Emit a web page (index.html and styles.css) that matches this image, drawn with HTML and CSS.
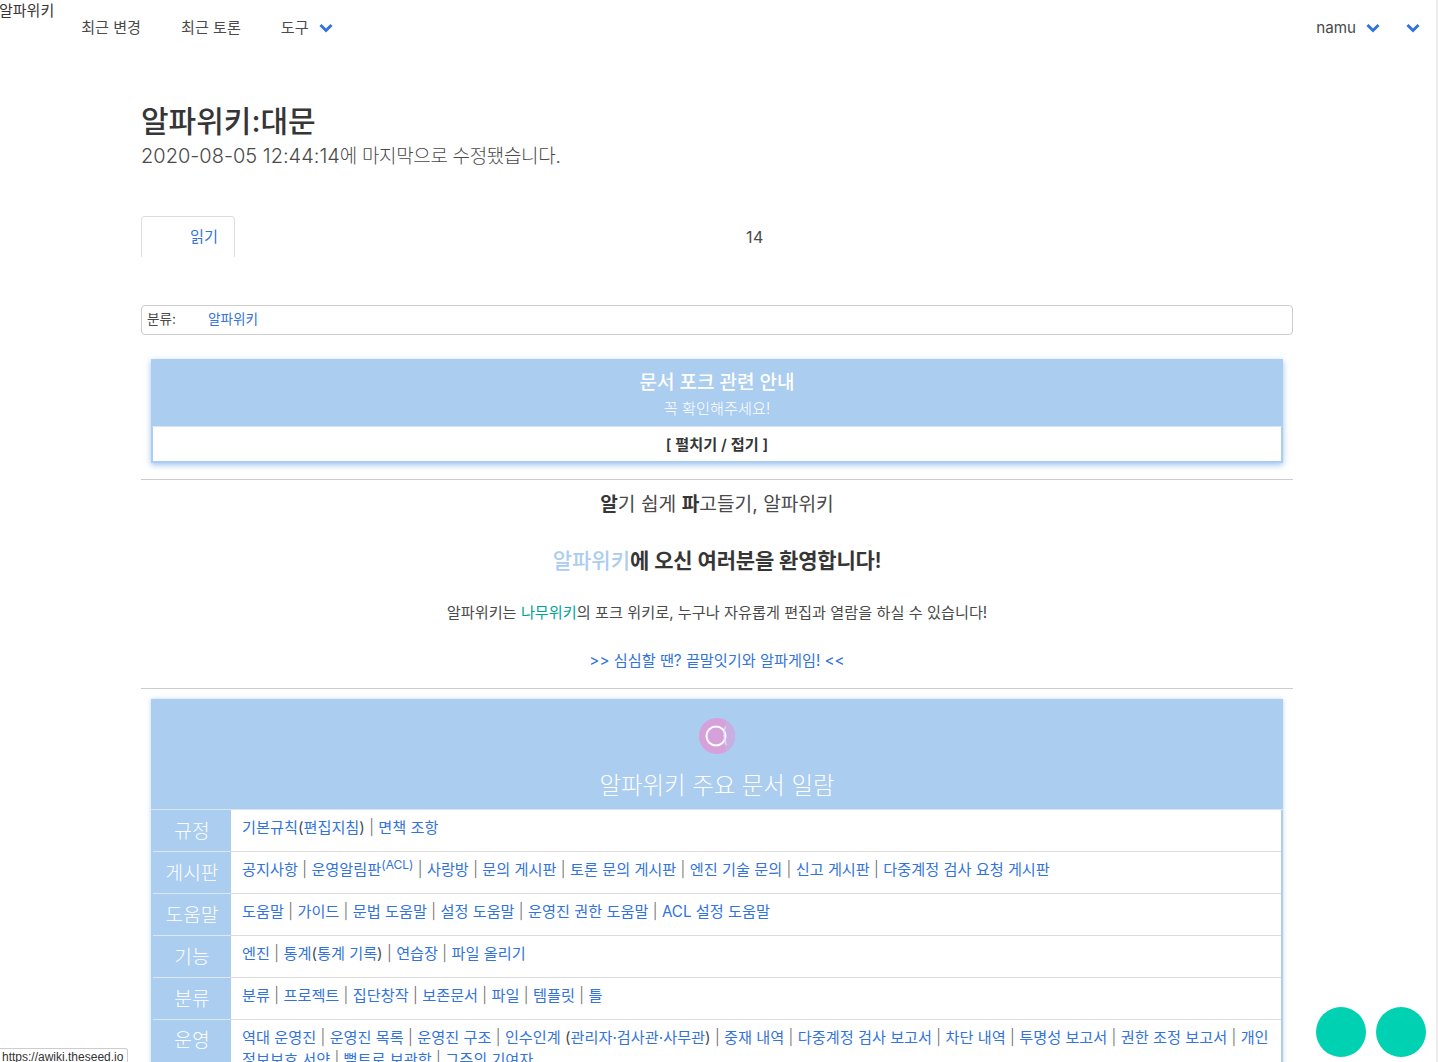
FILE: index.html
```html
<!DOCTYPE html>
<html lang="ko">
<head>
<meta charset="utf-8">
<title>알파위키:대문</title>
<link rel="stylesheet" href="styles.css">
</head>
<body>
<nav class="nav">
  <a class="brand">알파위키</a>
  <ul class="nav-left">
    <li>최근 변경</li>
    <li>최근 토론</li>
    <li>도구<svg class="chev" viewBox="0 0 14 10"><path d="M1.500 2 7 7.500 12.500 2"/></svg></li>
  </ul>
  <ul class="nav-right">
    <li>namu<svg class="chev" viewBox="0 0 14 10"><path d="M1.500 2 7 7.500 12.500 2"/></svg></li>
    <li><svg class="chev" viewBox="0 0 14 10"><path d="M1.500 2 7 7.500 12.500 2"/></svg></li>
  </ul>
</nav>
<main class="main">
  <h1 class="title">알파위키:대문</h1>
  <p class="modified">2020-08-05 12:44:14<span class="stamp-text">에 마지막으로 수정됐습니다.</span></p>
  <div class="tabs">
    <a class="tab">읽기</a>
    <span class="count">14</span>
  </div>
  <div class="category"><span class="cat-label">분류:</span><a class="link">알파위키</a></div>
  <section class="fold">
    <header class="fold-head">
      <div class="fold-title">문서 포크 관련 안내</div>
      <div class="fold-sub">꼭 확인해주세요!</div>
    </header>
    <div class="fold-toggle">[ 펼치기 / 접기 ]</div>
  </section>
  <hr class="rule first">
  <div class="welcome">
    <p class="slogan"><b>알</b>기 쉽게 <b>파</b>고들기, 알파위키</p>
    <p class="greet"><span class="sky">알파위키</span>에 오신 여러분을 환영합니다!</p>
    <p class="intro">알파위키는 <span class="namu">나무위키</span>의 포크 위키로, 누구나 자유롭게 편집과 열람을 하실 수 있습니다!</p>
    <p class="game"><a class="link">&gt;&gt; 심심할 땐? 끝말잇기와 알파게임! &lt;&lt;</a></p>
  </div>
  <hr class="rule">
  <section class="index">
    <header class="index-head">
      <svg class="logo" viewBox="0 0 36 36">
        <circle cx="18" cy="18" r="18" fill="#d6a0da"/>
        <path d="M27 2.500 A18 18 0 0 1 27 33.500 Q23 18 27 2.500Z" fill="#c9aee2"/>
        <circle cx="17" cy="18" r="9.500" fill="none" stroke="#fff" stroke-width="2"/>
        <path d="M26.500 8.500 Q23 18 27.500 27" fill="none" stroke="#eadcf2" stroke-width="1.200"/>
      </svg>
      <div class="index-title">알파위키 주요 문서 일람</div>
    </header>
    <div class="row"><div class="label">규정</div><div class="cell"><a class="link">기본규칙</a>(<a class="link">편집지침</a>) <span class="sep">|</span> <a class="link">면책 조항</a></div></div>
    <div class="row"><div class="label">게시판</div><div class="cell"><a class="link">공지사항</a> <span class="sep">|</span> <a class="link">운영알림판</a><sup class="link">(ACL)</sup> <span class="sep">|</span> <a class="link">사랑방</a> <span class="sep">|</span> <a class="link">문의 게시판</a> <span class="sep">|</span> <a class="link">토론 문의 게시판</a> <span class="sep">|</span> <a class="link">엔진 기술 문의</a> <span class="sep">|</span> <a class="link">신고 게시판</a> <span class="sep">|</span> <a class="link">다중계정 검사 요청 게시판</a></div></div>
    <div class="row"><div class="label">도움말</div><div class="cell"><a class="link">도움말</a> <span class="sep">|</span> <a class="link">가이드</a> <span class="sep">|</span> <a class="link">문법 도움말</a> <span class="sep">|</span> <a class="link">설정 도움말</a> <span class="sep">|</span> <a class="link">운영진 권한 도움말</a> <span class="sep">|</span> <a class="link">ACL 설정 도움말</a></div></div>
    <div class="row"><div class="label">기능</div><div class="cell"><a class="link">엔진</a> <span class="sep">|</span> <a class="link">통계</a>(<a class="link">통계 기록</a>) <span class="sep">|</span> <a class="link">연습장</a> <span class="sep">|</span> <a class="link">파일 올리기</a></div></div>
    <div class="row"><div class="label">분류</div><div class="cell"><a class="link">분류</a> <span class="sep">|</span> <a class="link">프로젝트</a> <span class="sep">|</span> <a class="link">집단창작</a> <span class="sep">|</span> <a class="link">보존문서</a> <span class="sep">|</span> <a class="link">파일</a> <span class="sep">|</span> <a class="link">템플릿</a> <span class="sep">|</span> <a class="link">틀</a></div></div>
    <div class="row"><div class="label">운영</div><div class="cell"><a class="link">역대 운영진</a> <span class="sep">|</span> <a class="link">운영진 목록</a> <span class="sep">|</span> <a class="link">운영진 구조</a> <span class="sep">|</span> <a class="link">인수인계</a> (<a class="link">관리자·검사관·사무관</a>) <span class="sep">|</span> <a class="link">중재 내역</a> <span class="sep">|</span> <a class="link">다중계정 검사 보고서</a> <span class="sep">|</span> <a class="link">차단 내역</a> <span class="sep">|</span> <a class="link">투명성 보고서</a> <span class="sep">|</span> <a class="link">권한 조정 보고서</a> <span class="sep">|</span> <a class="link">개인정보보호 서약</a> <span class="sep">|</span> <a class="link">뻘트로 보관함</a> <span class="sep">|</span> <a class="link">그주의 기여자</a></div></div>
  </section>
</main>
<div class="fabs"><span class="fab"></span><span class="fab"></span></div>
<div class="status">https://awiki.theseed.io</div>
</body>
</html>
```
FILE: styles.css
```css
* { box-sizing: border-box; }
html, body { margin: 0; height: 100%; overflow: hidden; }
body {
  background: #fff;
  color: #4a4a4a;
  font-family: Inter, "Noto Sans CJK KR", sans-serif;
  font-size: 15.200px;
  border-right: 2px solid #ececec;
}
.link { color: #3273dc; }
.sep { color: #666; font-weight: 300; letter-spacing: 0.170px; }
.nav { display: flex; height: 55px; align-items: flex-start; }
.brand { font-size: 15px; line-height: 22px; margin-left: -1px; color: #363636; }
.nav-left, .nav-right { list-style: none; margin: 0; padding: 0; display: flex; color: #4a4a4a; }
.nav-left { margin-left: 27px; gap: 40px; margin-top: 17px; font-size: 15.100px; }
.nav-right { margin-left: auto; margin-top: 17px; margin-right: 16px; gap: 16px; }
.nav li { display: flex; align-items: center; line-height: 22px; }
.chev { width: 14px; height: 10px; margin-left: 10px; fill: none; stroke: #3273dc; stroke-width: 3; }
.main { width: 1152px; margin-left: 141px; }
.title { font-size: 30px; font-weight: 500; line-height: 40px; margin: 46px 0 0; color: #363636; }
.modified { font-size: 20px; font-weight: 300; line-height: 30px; height: 30px; margin: 0; color: #4a4a4a; }
.stamp-text { font-size: 19px; letter-spacing: -0.350px; }
.tabs { display: flex; height: 41px; margin-top: 45px; align-items: stretch; }
.tab {
  width: 94px; padding: 9px 16px 0 0; text-align: right;
  border: 1px solid #ddd; border-bottom: 0; border-radius: 4px 4px 0 0;
  color: #3273dc; line-height: 22px;
}
.count { margin-left: 511px; line-height: 22px; padding-top: 10px; font-size: 16px; letter-spacing: 0.500px; }
.category {
  display: flex; align-items: center; height: 30px; margin-top: 48px;
  padding: 0 0 4px 5px; border: 1px solid #ccc; border-radius: 4px; font-size: 13.600px;
}
.cat-label { width: 61px; }
.fold { margin: 24px 10px 0; box-shadow: 0 2px 6px rgba(120, 170, 235, 0.700); }
.fold-head { background: #abcdf0; color: #fff; height: 67px; text-align: center; padding-top: 11px; }
.fold-title { font-size: 19px; font-weight: 500; line-height: 26px; }
.fold-sub { font-size: 15.200px; line-height: 20px; margin-top: 3px; font-weight: 300; }
.fold-toggle {
  height: 37px; border: 2px solid #abcdf0; border-top: 1px solid #d8e6f4; background: #fff;
  text-align: center; font-weight: 600; line-height: 35px; color: #363636;
}
.rule { border: 0; border-top: 1px solid #ccc; margin: 0; }
.rule.first { margin-top: 16px; }
.welcome { height: 208px; text-align: center; overflow: hidden; }
.welcome p { margin: 0; }
.slogan { font-size: 19.200px; line-height: 28px; margin-top: 10px !important; }
.slogan b { font-weight: 700; color: #363636; }
.greet { font-size: 21px; font-weight: 600; line-height: 30px; margin-top: 28px !important; color: #363636; letter-spacing: -0.200px; }
.sky { color: #abcdf0; font-weight: 500; letter-spacing: 0; }
.intro { line-height: 22px; margin-top: 26px !important; }
.namu { color: #00a495; }
.game { line-height: 22px; margin-top: 26px !important; }
.index { margin: 10px 10px 0; border: 2px solid #abcdf0; border-width: 0 2px; box-shadow: 0 0 4px rgba(120, 170, 235, 0.500); }
.index-head { height: 111px; background: #abcdf0; color: #fff; text-align: center; padding-top: 19px; border-bottom: 1px solid #dbe5f0; margin: 0 -2px; }
.logo { width: 36px; height: 36px; display: block; margin: 0 auto; }
.index-title { font-size: 23.400px; font-weight: 300; line-height: 34px; margin-top: 15px; }
.row { display: flex; height: 42px; border-bottom: 1px solid #ddd; }
.row:last-child { height: 80px; }
.label {
  width: 78px; flex: none; background: #abcdf0; color: #fff; font-size: 19.200px; font-weight: 300;
  display: flex; align-items: center; justify-content: center; padding-bottom: 2px;
  border-bottom: 1px solid #dce7f3; margin-bottom: -1px;
}
.row:last-child .label { align-items: flex-start; padding-top: 5px; }
.cell { flex: 1; padding: 7px 8px 0 11px; line-height: 22px; }
sup { font-size: 12px; line-height: 0; }
.fabs { position: fixed; right: 12px; bottom: 5px; display: flex; gap: 10px; }
.fab { width: 50px; height: 50px; border-radius: 50%; background: #00d1b2; }
.status {
  position: fixed; left: 0; bottom: 0; height: 14px; padding: 0 4px 0 2px; overflow: hidden;
  font: 12px/17px "Liberation Sans", sans-serif; color: #333; background: #fff;
  border: 1px solid #ccc; border-bottom: 0; border-left: 0; border-radius: 0 3px 0 0;
}
```
